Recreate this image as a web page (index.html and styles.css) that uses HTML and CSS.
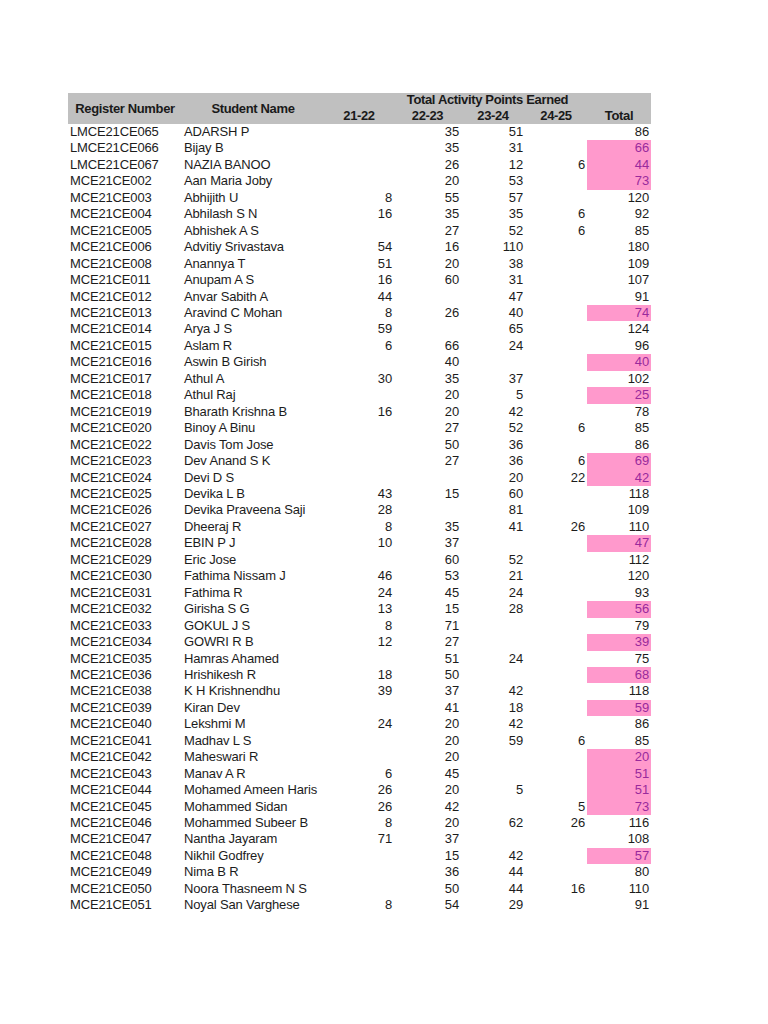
FILE: index.html
```html
<!DOCTYPE html>
<html>
<head>
<meta charset="utf-8">
<link rel="stylesheet" href="styles.css">
</head>
<body>
<table class="sheet">
<colgroup>
<col class="c-reg"><col class="c-name"><col class="c-y1"><col class="c-y2"><col class="c-y3"><col class="c-y4"><col class="c-tot">
</colgroup>
<thead>
<tr class="h1">
<th rowspan="2" class="hl">Register Number</th>
<th rowspan="2" class="hl">Student Name</th>
<th colspan="5" class="group">Total Activity Points Earned</th>
</tr>
<tr class="h2">
<th class="yr">21-22</th><th class="yr">22-23</th><th class="yr">23-24</th><th class="yr">24-25</th><th class="yr">Total</th>
</tr>
</thead>
<tbody>
<tr><td>LMCE21CE065</td><td>ADARSH P</td><td></td><td>35</td><td>51</td><td></td><td>86</td></tr>
<tr><td>LMCE21CE066</td><td>Bijay B</td><td></td><td>35</td><td>31</td><td></td><td class="low">66</td></tr>
<tr><td>LMCE21CE067</td><td>NAZIA BANOO</td><td></td><td>26</td><td>12</td><td>6</td><td class="low">44</td></tr>
<tr><td>MCE21CE002</td><td>Aan Maria Joby</td><td></td><td>20</td><td>53</td><td></td><td class="low">73</td></tr>
<tr><td>MCE21CE003</td><td>Abhijith U</td><td>8</td><td>55</td><td>57</td><td></td><td>120</td></tr>
<tr><td>MCE21CE004</td><td>Abhilash S N</td><td>16</td><td>35</td><td>35</td><td>6</td><td>92</td></tr>
<tr><td>MCE21CE005</td><td>Abhishek A S</td><td></td><td>27</td><td>52</td><td>6</td><td>85</td></tr>
<tr><td>MCE21CE006</td><td>Advitiy Srivastava</td><td>54</td><td>16</td><td>110</td><td></td><td>180</td></tr>
<tr><td>MCE21CE008</td><td>Anannya T</td><td>51</td><td>20</td><td>38</td><td></td><td>109</td></tr>
<tr><td>MCE21CE011</td><td>Anupam A S</td><td>16</td><td>60</td><td>31</td><td></td><td>107</td></tr>
<tr><td>MCE21CE012</td><td>Anvar Sabith A</td><td>44</td><td></td><td>47</td><td></td><td>91</td></tr>
<tr><td>MCE21CE013</td><td>Aravind C Mohan</td><td>8</td><td>26</td><td>40</td><td></td><td class="low">74</td></tr>
<tr><td>MCE21CE014</td><td>Arya J S</td><td>59</td><td></td><td>65</td><td></td><td>124</td></tr>
<tr><td>MCE21CE015</td><td>Aslam R</td><td>6</td><td>66</td><td>24</td><td></td><td>96</td></tr>
<tr><td>MCE21CE016</td><td>Aswin B Girish</td><td></td><td>40</td><td></td><td></td><td class="low">40</td></tr>
<tr><td>MCE21CE017</td><td>Athul A</td><td>30</td><td>35</td><td>37</td><td></td><td>102</td></tr>
<tr><td>MCE21CE018</td><td>Athul Raj</td><td></td><td>20</td><td>5</td><td></td><td class="low">25</td></tr>
<tr><td>MCE21CE019</td><td>Bharath Krishna B</td><td>16</td><td>20</td><td>42</td><td></td><td>78</td></tr>
<tr><td>MCE21CE020</td><td>Binoy A Binu</td><td></td><td>27</td><td>52</td><td>6</td><td>85</td></tr>
<tr><td>MCE21CE022</td><td>Davis Tom Jose</td><td></td><td>50</td><td>36</td><td></td><td>86</td></tr>
<tr><td>MCE21CE023</td><td>Dev Anand S K</td><td></td><td>27</td><td>36</td><td>6</td><td class="low">69</td></tr>
<tr><td>MCE21CE024</td><td>Devi D S</td><td></td><td></td><td>20</td><td>22</td><td class="low">42</td></tr>
<tr><td>MCE21CE025</td><td>Devika L B</td><td>43</td><td>15</td><td>60</td><td></td><td>118</td></tr>
<tr><td>MCE21CE026</td><td>Devika Praveena Saji</td><td>28</td><td></td><td>81</td><td></td><td>109</td></tr>
<tr><td>MCE21CE027</td><td>Dheeraj R</td><td>8</td><td>35</td><td>41</td><td>26</td><td>110</td></tr>
<tr><td>MCE21CE028</td><td>EBIN P J</td><td>10</td><td>37</td><td></td><td></td><td class="low">47</td></tr>
<tr><td>MCE21CE029</td><td>Eric Jose</td><td></td><td>60</td><td>52</td><td></td><td>112</td></tr>
<tr><td>MCE21CE030</td><td>Fathima Nissam J</td><td>46</td><td>53</td><td>21</td><td></td><td>120</td></tr>
<tr><td>MCE21CE031</td><td>Fathima R</td><td>24</td><td>45</td><td>24</td><td></td><td>93</td></tr>
<tr><td>MCE21CE032</td><td>Girisha S G</td><td>13</td><td>15</td><td>28</td><td></td><td class="low">56</td></tr>
<tr><td>MCE21CE033</td><td>GOKUL J S</td><td>8</td><td>71</td><td></td><td></td><td>79</td></tr>
<tr><td>MCE21CE034</td><td>GOWRI R B</td><td>12</td><td>27</td><td></td><td></td><td class="low">39</td></tr>
<tr><td>MCE21CE035</td><td>Hamras Ahamed</td><td></td><td>51</td><td>24</td><td></td><td>75</td></tr>
<tr><td>MCE21CE036</td><td>Hrishikesh R</td><td>18</td><td>50</td><td></td><td></td><td class="low">68</td></tr>
<tr><td>MCE21CE038</td><td>K H Krishnendhu</td><td>39</td><td>37</td><td>42</td><td></td><td>118</td></tr>
<tr><td>MCE21CE039</td><td>Kiran Dev</td><td></td><td>41</td><td>18</td><td></td><td class="low">59</td></tr>
<tr><td>MCE21CE040</td><td>Lekshmi M</td><td>24</td><td>20</td><td>42</td><td></td><td>86</td></tr>
<tr><td>MCE21CE041</td><td>Madhav L S</td><td></td><td>20</td><td>59</td><td>6</td><td>85</td></tr>
<tr><td>MCE21CE042</td><td>Maheswari R</td><td></td><td>20</td><td></td><td></td><td class="low">20</td></tr>
<tr><td>MCE21CE043</td><td>Manav A R</td><td>6</td><td>45</td><td></td><td></td><td class="low">51</td></tr>
<tr><td>MCE21CE044</td><td>Mohamed Ameen Haris</td><td>26</td><td>20</td><td>5</td><td></td><td class="low">51</td></tr>
<tr><td>MCE21CE045</td><td>Mohammed Sidan</td><td>26</td><td>42</td><td></td><td>5</td><td class="low">73</td></tr>
<tr><td>MCE21CE046</td><td>Mohammed Subeer B</td><td>8</td><td>20</td><td>62</td><td>26</td><td>116</td></tr>
<tr><td>MCE21CE047</td><td>Nantha Jayaram</td><td>71</td><td>37</td><td></td><td></td><td>108</td></tr>
<tr><td>MCE21CE048</td><td>Nikhil Godfrey</td><td></td><td>15</td><td>42</td><td></td><td class="low">57</td></tr>
<tr><td>MCE21CE049</td><td>Nima B R</td><td></td><td>36</td><td>44</td><td></td><td>80</td></tr>
<tr><td>MCE21CE050</td><td>Noora Thasneem N S</td><td></td><td>50</td><td>44</td><td>16</td><td>110</td></tr>
<tr><td>MCE21CE051</td><td>Noyal San Varghese</td><td>8</td><td>54</td><td>29</td><td></td><td>91</td></tr>
</tbody>
</table>
</body>
</html>
```
FILE: styles.css
```css
html, body {
  margin: 0;
  padding: 0;
  background: #ffffff;
}
body {
  padding: 93px 0 0 68px;
  font-family: "Liberation Sans", Arial, sans-serif;
  font-size: 13px;
  letter-spacing: -0.15px;
  color: #1c1c1c;
}
.sheet {
  border-collapse: collapse;
  border-spacing: 0;
  table-layout: fixed;
  width: 583px;
}
.c-reg { width: 114px; }
.c-name { width: 142px; }
.c-y1 { width: 70px; }
.c-y2 { width: 67px; }
.c-y3 { width: 64px; }
.c-y4 { width: 62px; }
.c-tot { width: 64px; }

.sheet th {
  background: #c0c0c0;
  font-weight: bold;
  font-size: 13px;
  letter-spacing: -0.35px;
  color: #1a1a1a;
  padding: 0;
  text-align: center;
  white-space: nowrap;
}
.h1 th.group {
  height: 13px;
  line-height: 13px;
  vertical-align: middle;
}
.h2 th {
  height: 18px;
  line-height: 16px;
  vertical-align: bottom;
}
.sheet th.hl {
  vertical-align: middle;
  line-height: 16px;
}
.sheet td {
  height: 16.45px;
  line-height: 16.45px;
  padding: 0 2px;
  text-align: right;
  white-space: nowrap;
  overflow: hidden;
}
.sheet td:nth-child(1),
.sheet td:nth-child(2) {
  text-align: left;
}
.sheet td.low {
  background: #ff99cc;
  color: #9a2a9c;
}
```
